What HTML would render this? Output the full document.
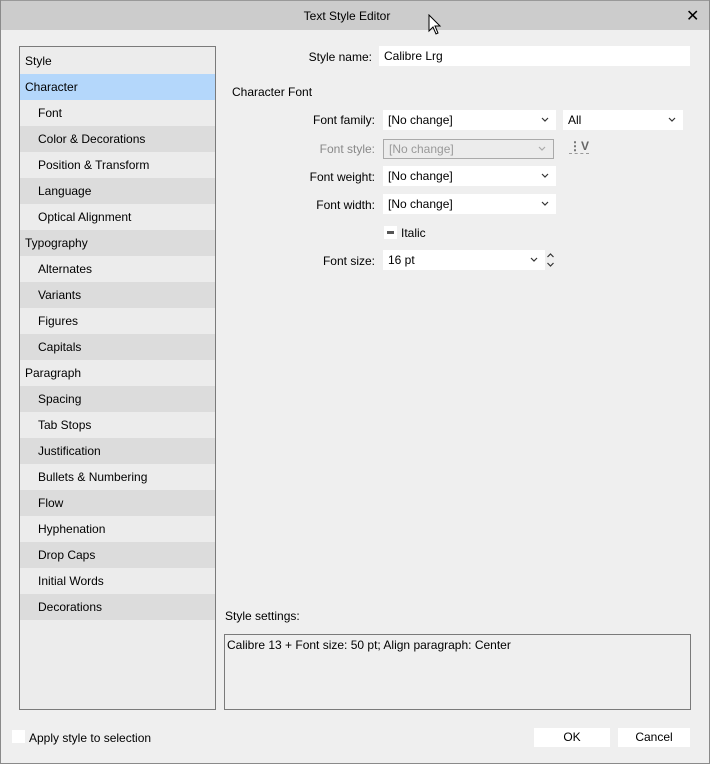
<!DOCTYPE html>
<html><head><style>
*{box-sizing:border-box;margin:0;padding:0}
body{width:710px;height:764px;background:#efefef;font-family:"Liberation Sans",sans-serif;font-size:12px;color:#000;position:relative;overflow:hidden}
.win{position:absolute;left:0;top:0;width:710px;height:764px;border:1px solid #8a8a8a;border-top:none}
.title{position:absolute;left:0;top:0;width:710px;height:30px;background:#cccccc;border-top:1px solid #999}
.title span{position:absolute;left:0;width:694px;text-align:center;top:8px;font-size:12px}
.x{position:absolute;left:686px;top:5px;font-size:16px}
.list{position:absolute;left:19px;top:46px;width:197px;height:664px;border:1px solid #7a7a7a;background:#ececec}
.row{position:absolute;left:0;width:195px;height:26px;line-height:26px;padding-left:5px}
.sub{padding-left:18px}
.d{background:#dcdcdc}
.sel{background:#b4d7fb}
.a{position:absolute}
.lbl{position:absolute;text-align:right;width:150px}
.inp{position:absolute;background:#fff;height:20px;line-height:20px;padding-left:5px}
.chev{position:absolute;right:7px;top:7px}
.btn{position:absolute;background:#fff;height:19px;line-height:19px;text-align:center}
</style></head><body>
<div class="title"><span>Text Style Editor</span><div class="x">✕</div></div>
<svg class="a" style="left:428px;top:14px" width="14" height="22" viewBox="0 0 14 22"><path d="M1 1 L1 17 L5 13 L8 20 L10 19 L7 12 L12 12 Z" fill="#fff" stroke="#000" stroke-width="1"/></svg>
<div class="win"></div>
<div class="list">
<div class="row" style="top:1px">Style</div>
<div class="row sel" style="top:27px">Character</div>
<div class="row sub" style="top:53px">Font</div>
<div class="row sub d" style="top:79px">Color &amp; Decorations</div>
<div class="row sub" style="top:105px">Position &amp; Transform</div>
<div class="row sub d" style="top:131px">Language</div>
<div class="row sub" style="top:157px">Optical Alignment</div>
<div class="row d" style="top:183px">Typography</div>
<div class="row sub" style="top:209px">Alternates</div>
<div class="row sub d" style="top:235px">Variants</div>
<div class="row sub" style="top:261px">Figures</div>
<div class="row sub d" style="top:287px">Capitals</div>
<div class="row" style="top:313px">Paragraph</div>
<div class="row sub d" style="top:339px">Spacing</div>
<div class="row sub" style="top:365px">Tab Stops</div>
<div class="row sub d" style="top:391px">Justification</div>
<div class="row sub" style="top:417px">Bullets &amp; Numbering</div>
<div class="row sub d" style="top:443px">Flow</div>
<div class="row sub" style="top:469px">Hyphenation</div>
<div class="row sub d" style="top:495px">Drop Caps</div>
<div class="row sub" style="top:521px">Initial Words</div>
<div class="row sub d" style="top:547px">Decorations</div>
</div>

<div class="lbl" style="left:222px;top:50px">Style name:</div>
<div class="inp" style="left:379px;top:46px;width:311px">Calibre Lrg</div>
<div class="a" style="left:232px;top:85px">Character Font</div>

<div class="lbl" style="left:225px;top:113px">Font family:</div>
<div class="inp" style="left:383px;top:110px;width:173px">[No change]<svg class="chev" width="8" height="5"><path d="M1 1L4 4L7 1" fill="none" stroke="#333" stroke-width="1.2"/></svg></div>
<div class="inp" style="left:563px;top:110px;width:120px">All<svg class="chev" width="8" height="5"><path d="M1 1L4 4L7 1" fill="none" stroke="#333" stroke-width="1.2"/></svg></div>

<div class="lbl" style="left:225px;top:142px;color:#888">Font style:</div>
<div class="inp" style="left:383px;top:139px;width:171px;background:#ececec;border:1px solid #aaa;color:#999;line-height:18px">[No change]<svg class="chev" style="top:6px" width="8" height="5"><path d="M1 1L4 4L7 1" fill="none" stroke="#aaa" stroke-width="1.2"/></svg></div>
<div class="a" style="left:569px;top:140px;font-weight:bold;color:#666;font-size:12px;border-bottom:1px dashed #999;line-height:13px">&#8942;V</div>

<div class="lbl" style="left:225px;top:170px">Font weight:</div>
<div class="inp" style="left:383px;top:166px;width:173px">[No change]<svg class="chev" width="8" height="5"><path d="M1 1L4 4L7 1" fill="none" stroke="#333" stroke-width="1.2"/></svg></div>
<div class="lbl" style="left:225px;top:198px">Font width:</div>
<div class="inp" style="left:383px;top:194px;width:173px">[No change]<svg class="chev" width="8" height="5"><path d="M1 1L4 4L7 1" fill="none" stroke="#333" stroke-width="1.2"/></svg></div>

<div class="a" style="left:384px;top:226px;width:13px;height:13px;background:#fff"><div style="position:absolute;left:3px;top:5px;width:7px;height:3px;background:#555"></div></div>
<div class="a" style="left:401px;top:226px">Italic</div>

<div class="lbl" style="left:225px;top:254px">Font size:</div>
<div class="inp" style="left:383px;top:250px;width:162px">16 pt<svg class="chev" width="8" height="5"><path d="M1 1L4 4L7 1" fill="none" stroke="#333" stroke-width="1.2"/></svg></div>
<svg class="a" style="left:546px;top:252px" width="9" height="16"><path d="M1.5 5L4.5 2L7.5 5M1.5 11L4.5 14L7.5 11" fill="none" stroke="#333" stroke-width="1.2"/></svg>

<div class="a" style="left:225px;top:609px">Style settings:</div>
<div class="a" style="left:224px;top:634px;width:467px;height:76px;border:1px solid #7a7a7a;padding:3px 2px">Calibre 13 + Font size: 50 pt; Align paragraph: Center</div>

<div class="a" style="left:12px;top:730px;width:13px;height:13px;background:#fff"></div>
<div class="a" style="left:29px;top:731px">Apply style to selection</div>
<div class="btn" style="left:534px;top:728px;width:76px">OK</div>
<div class="btn" style="left:618px;top:728px;width:72px">Cancel</div>
</body></html>
